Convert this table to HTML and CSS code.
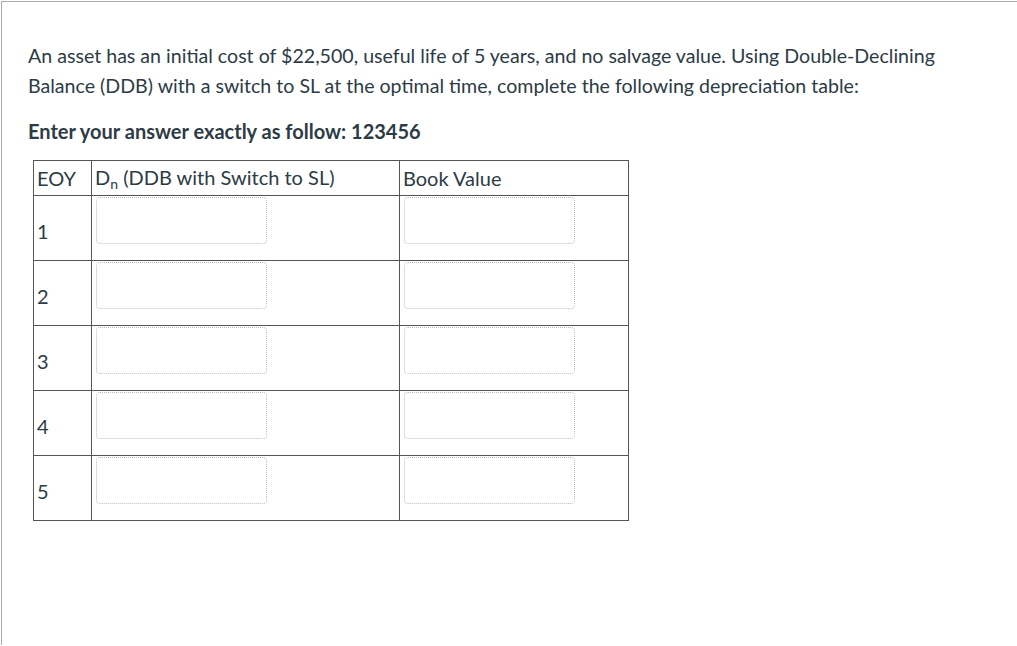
FILE: index.html
```html
<!DOCTYPE html>
<html>
<head>
<meta charset="utf-8">
<link rel="stylesheet" href="styles.css">
</head>
<body>
<div class="page">
  <p class="question">An asset has an initial cost of $22,500, useful life of 5 years, and no salvage value. Using Double-Declining Balance (DDB) with a switch to SL at the optimal time, complete the following depreciation table:</p>
  <p class="instruction">Enter your answer exactly as follow: 123456</p>
  <table class="dep-table">
    <thead>
      <tr class="head-row">
        <th class="col-eoy">EOY</th>
        <th class="col-dn">D<sub>n</sub> (DDB with Switch to SL)</th>
        <th class="col-bv">Book Value</th>
      </tr>
    </thead>
    <tbody>
      <tr class="body-row"><td class="num">1</td><td><input class="answer" type="text"></td><td><input class="answer" type="text"></td></tr>
      <tr class="body-row"><td class="num">2</td><td><input class="answer" type="text"></td><td><input class="answer" type="text"></td></tr>
      <tr class="body-row"><td class="num">3</td><td><input class="answer" type="text"></td><td><input class="answer" type="text"></td></tr>
      <tr class="body-row"><td class="num">4</td><td><input class="answer" type="text"></td><td><input class="answer" type="text"></td></tr>
      <tr class="body-row"><td class="num">5</td><td><input class="answer" type="text"></td><td><input class="answer" type="text"></td></tr>
    </tbody>
  </table>
</div>
</body>
</html>
```
FILE: styles.css
```css
html, body {
  margin: 0;
  padding: 0;
  background: #fff;
}
body {
  padding: 1px 0 0 1px;
  font-family: Lato, "Liberation Sans", sans-serif;
  color: #2d3b45;
}
.page {
  border-top: 1px solid #aaa;
  border-left: 1px solid #aaa;
  height: 644px;
  box-sizing: border-box;
  padding: 39px 20px 0 26px;
}
.question {
  margin: 0;
  font-size: 19.6px;
  line-height: 30px;
  width: 940px;
}
.instruction {
  margin: 15px 0 0;
  font-size: 20px;
  line-height: 30px;
  font-weight: bold;
}
.dep-table {
  margin: 14px 0 0 5px;
  border-collapse: collapse;
  border: 1px solid #333;
  font-size: 20px;
}
.dep-table th, .dep-table td {
  border: 1px solid #555;
  padding: 0 0 0 3px;
  text-align: left;
  font-weight: normal;
}
.head-row th {
  height: 34px;
  vertical-align: middle;
}
.col-eoy { width: 54px; }
.col-dn { width: 304px; }
.col-bv { width: 225px; }
.dep-table sub {
  font-size: 14px;
  vertical-align: -4px;
}
.body-row td {
  padding: 1px 0 1px 4px;
  vertical-align: middle;
}
.body-row td.num {
  padding-left: 3px;
  padding-top: 6px;
}
.answer {
  display: block;
  box-sizing: border-box;
  width: 171px;
  height: 47px;
  margin: 0 0 15px;
  border: 1px dotted #bbb;
  border-radius: 4px;
  background: #fff;
  padding: 0;
}
```
